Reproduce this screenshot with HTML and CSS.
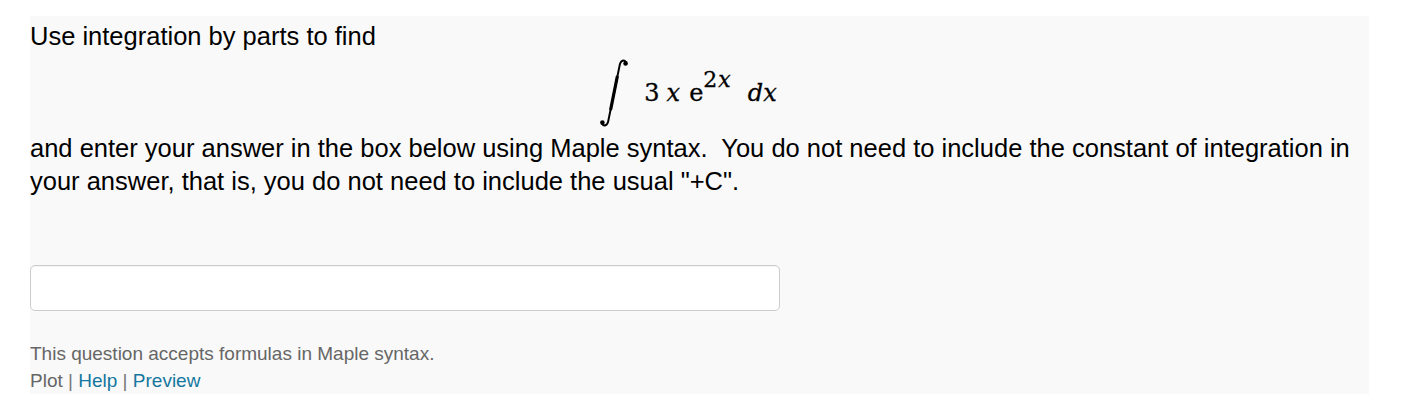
FILE: index.html
```html
<!DOCTYPE html>
<html lang="en">
<head>
  <meta charset="UTF-8">
  <title>Integration by parts</title>
  <link rel="stylesheet" href="styles.css">
</head>
<body>
  <div class="question">
    <div class="qtext">
      <p>Use integration by parts to find</p>
      <div class="math">
        <svg class="integral" width="30" height="70" viewBox="0 0 30 70">
          <path d="M27.2 5.2 C25.6 1.2 21.4 1.4 20.4 8.6 L9.6 61.4 C8.6 68.6 4.4 68.8 2.8 64.8" fill="none" stroke="#000" stroke-width="2"/>
          <path d="M18.2 19 L11.8 51" stroke="#000" stroke-width="3.2" stroke-linecap="round"/>
          <circle cx="26.6" cy="5.4" r="2.3" fill="#000"/>
          <circle cx="3.4" cy="64.6" r="2.3" fill="#000"/>
        </svg>
        <span class="expr"><span>3</span><i class="v">x</i><span class="e">e</span><sup>2<i>x</i></sup><i class="dx">dx</i></span>
      </div>
      <p>and enter your answer in the box below using Maple syntax.&nbsp; You do not need to include the constant of integration in your answer, that is, you do not need to include the usual "+C".</p>
    </div>

    <input type="text" class="answer">

    <div class="hint">
      <div>This question accepts formulas in Maple syntax.</div>
      <div>Plot <span class="sep">|</span> <a href="#">Help</a> <span class="sep">|</span> <a href="#">Preview</a></div>
    </div>
  </div>
</body>
</html>
```

FILE: styles.css
```css
body {
  margin: 16px 39px 0 30px;
  background: #fff;
  font-family: "Liberation Sans", Arial, sans-serif;
  color: #000;
}
.question {
  background: #f9f9f9;
  padding: 4px 10px 0 0;
}
.qtext {
  font-size: 25.5px;
  line-height: 33px;
}
.qtext p {
  margin: 0;
}
.math {
  height: 79px;
  display: flex;
  align-items: flex-start;
  justify-content: center;
  padding-right: 13px;
}
.integral {
  margin-top: 5px;
  margin-right: 15px;
}
.expr {
  display: block;
  font-family: "DejaVu Serif", "Liberation Serif", serif;
  font-size: 24px;
  line-height: 26px;
  margin-top: 27px;
  white-space: nowrap;
  -webkit-text-stroke: 0.3px #000;
}
.expr .v {
  margin-left: 7px;
}
.expr .e {
  margin-left: 9px;
}
.expr sup {
  font-size: 22px;
  line-height: 0;
  vertical-align: 14px;
}
.expr sup i {
  margin-left: 1px;
}
.expr .dx {
  margin-left: 17px;
}
.answer {
  display: block;
  box-sizing: border-box;
  width: 750px;
  height: 46px;
  margin: 67px 0 29px;
  border: 1px solid #ccc;
  border-radius: 5px;
  background: #fff;
  box-shadow: inset 0 1px 1px rgba(0,0,0,0.05);
  font-size: 18px;
  padding: 6px 10px;
}
.hint {
  font-size: 19px;
  line-height: 27px;
  color: #666;
}
.hint a {
  color: #13779f;
  text-decoration: none;
}
.sep {
  color: #777;
}
```
